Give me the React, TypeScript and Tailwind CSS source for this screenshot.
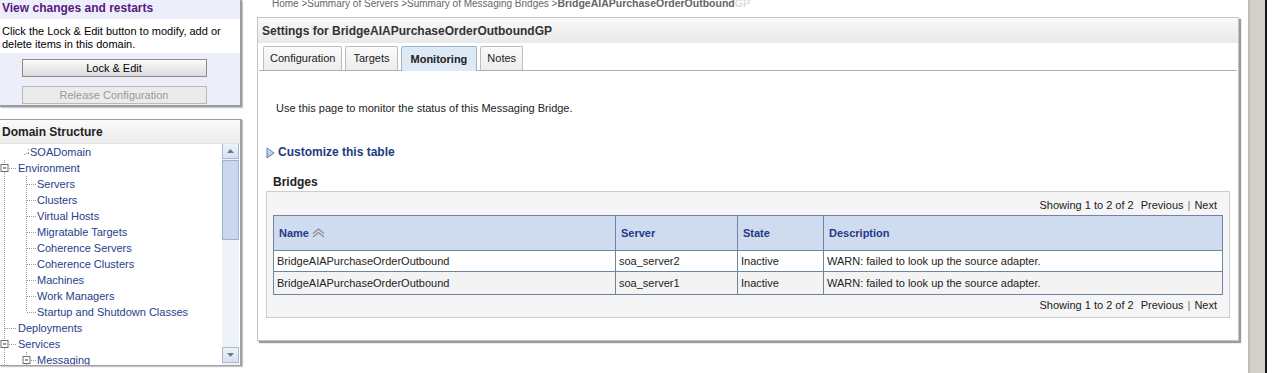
import React from "react";

const FONT = "font-['Liberation_Sans',Arial,sans-serif]";

type G = "none" | "line" | "tee" | "end" | "box" | "boxTop";

// tree connector drawing for one row (two guide columns)
function Guides({ g0, g1, dots }: { g0: G; g1: G; dots?: boolean }) {
  const c = "#9a9a9a";
  const col = (g: G, x: number, reach: number) => {
    const parts: React.ReactNode[] = [];
    if (g === "line" || g === "tee") parts.push(<line key="v" x1={x} y1={0} x2={x} y2={16} />);
    if (g === "end") parts.push(<line key="v" x1={x} y1={0} x2={x} y2={8} />);
    if (g === "tee" || g === "end") parts.push(<line key="h" x1={x} y1={8} x2={reach} y2={8} />);
    if (g === "box" || g === "boxTop") {
      parts.push(<line key="a" x1={x} y1={0} x2={x} y2={4} />);
      if (g === "box") parts.push(<line key="b" x1={x} y1={12} x2={x} y2={16} />);
      parts.push(<line key="h" x1={x + 4} y1={8} x2={reach} y2={8} />);
    }
    return parts;
  };
  const box = (g: G, x: number) =>
    g === "box" || g === "boxTop" ? (
      <g>
        <rect x={x - 3.5} y={4.5} width={7} height={7} fill="#fff" stroke="#707070" />
        <line x1={x - 1.5} y1={8} x2={x + 1.5} y2={8} stroke="#333" />
      </g>
    ) : null;
  return (
    <svg width={37} height={16} className="shrink-0">
      <g stroke={c} strokeDasharray="1 1" shapeRendering="crispEdges">
        {col(g0, 4.5, 17)}
        {col(g1, 26.5, 36)}
      </g>
      {box(g0, 4.5)}
      {box(g1, 26.5)}
      {dots && (
        <g fill="#8a8a8a">
          <rect x={24} y={10} width={1} height={1} />
          <rect x={26} y={9} width={1} height={1} />
          <rect x={28} y={8} width={1} height={2} />
          <rect x={28} y={5} width={1} height={1} />
        </g>
      )}
    </svg>
  );
}

const tree: { label: string; level: 0 | 1 | 2; g0: G; g1: G; dots?: boolean }[] = [
  { label: "SOADomain", level: 0, g0: "none", g1: "none", dots: true },
  { label: "Environment", level: 1, g0: "box", g1: "none" },
  { label: "Servers", level: 2, g0: "line", g1: "tee" },
  { label: "Clusters", level: 2, g0: "line", g1: "tee" },
  { label: "Virtual Hosts", level: 2, g0: "line", g1: "tee" },
  { label: "Migratable Targets", level: 2, g0: "line", g1: "tee" },
  { label: "Coherence Servers", level: 2, g0: "line", g1: "tee" },
  { label: "Coherence Clusters", level: 2, g0: "line", g1: "tee" },
  { label: "Machines", level: 2, g0: "line", g1: "tee" },
  { label: "Work Managers", level: 2, g0: "line", g1: "tee" },
  { label: "Startup and Shutdown Classes", level: 2, g0: "line", g1: "end" },
  { label: "Deployments", level: 1, g0: "tee", g1: "none" },
  { label: "Services", level: 1, g0: "box", g1: "none" },
  { label: "Messaging", level: 2, g0: "line", g1: "box" },
];

function TreeRow({ label, level, g0, g1, dots }: (typeof tree)[number]) {
  return (
    <div className="flex h-4 items-center whitespace-nowrap">
      {level === 1 ? (
        <div className="w-[18px] shrink-0 overflow-hidden">
          <Guides g0={g0} g1={g1} />
        </div>
      ) : (
        <Guides g0={g0} g1={g1} dots={dots} />
      )}
      <span className={level === 0 ? "-ml-[7px] text-[#27408b]" : "text-[#27408b]"}>{label}</span>
    </div>
  );
}

function ScrollArrow({ down }: { down?: boolean }) {
  return (
    <div className="flex h-4 items-center justify-center border border-[#a9b9cf] bg-gradient-to-b from-[#eef3fa] to-[#d6e1f0]">
      <svg width={7} height={4}>
        <path d={down ? "M0 0h7L3.5 4z" : "M0 4h7L3.5 0z"} fill="#6b7a8f" />
      </svg>
    </div>
  );
}

function ChangeCenter() {
  return (
    <div className="h-[107px] border-r-2 border-b-2 border-[#9c9c9c] bg-[#eceffa] shadow-[1px_1px_1px_#c8c8c8]">
      <div className="h-[19px] px-[2px] pt-[2px] text-[12px] font-bold leading-[13px] text-[#5a1782]">
        View changes and restarts
      </div>
      <div className="h-[34px] bg-white px-[2px] pt-[6px] text-[11px] leading-[13px] text-black">
        Click the Lock &amp; Edit button to modify, add or delete items in this domain.
      </div>
      <div className="flex flex-col items-center gap-[9px] pt-[6px] pr-[12px]">
        <button className="h-[18px] w-[185px] border border-[#8b8b8b] bg-gradient-to-b from-[#fbfbfb] to-[#dcdcdc] text-[11px] text-black">
          Lock &amp; Edit
        </button>
        <button className="h-[18px] w-[185px] border border-[#b9b9b9] bg-[#ebebeb] text-[11px] text-[#9a9a9a]">
          Release Configuration
        </button>
      </div>
    </div>
  );
}

function DomainStructure() {
  return (
    <div className="mt-[12px] h-[247px] border-t border-r-2 border-b border-[#a0a0a0] bg-white shadow-[1px_1px_1px_#c8c8c8]">
      <div className="h-[24px] border-b border-[#e2e2e2] bg-gradient-to-b from-[#fafafa] to-[#ececec] px-[2px] pt-[6px] text-[12px] font-bold leading-[13px] text-[#222]">
        Domain Structure
      </div>
      <div className="flex h-[221px] overflow-hidden">
        <div className="flex-1 text-[11px] leading-4">
          {tree.map((r) => (
            <TreeRow key={r.label} {...r} />
          ))}
        </div>
        <div className="mr-[1px] -mt-[1px] flex w-[17px] flex-col bg-[#eef3fa]">
          <ScrollArrow />
          <div className="mt-[1px] h-[80px] border border-[#9fb3cf] bg-[#c9d8ee]" />
          <div className="flex-1" />
          <ScrollArrow down />
          <div className="h-[2px]" />
        </div>
      </div>
    </div>
  );
}

function SortIcon() {
  return (
    <svg width={13} height={10} className="ml-[3px] inline-block align-[-1px]">
      <path d="M1 9l5.5-4.5L12 9M1 5.5L6.5 1 12 5.5" fill="none" stroke="#8a8a8a" strokeWidth={1.1} />
    </svg>
  );
}

function Pager() {
  return (
    <div className="flex h-[20px] items-center justify-end pr-[6px] text-[11px] text-[#222]">
      Showing 1 to 2 of 2<span className="ml-[7px]">Previous</span>
      <span className="mx-[4px] text-[#777]">|</span>Next
    </div>
  );
}

const rows = [
  { name: "BridgeAIAPurchaseOrderOutbound", server: "soa_server2", state: "Inactive", desc: "WARN: failed to look up the source adapter." },
  { name: "BridgeAIAPurchaseOrderOutbound", server: "soa_server1", state: "Inactive", desc: "WARN: failed to look up the source adapter." },
];

const tabs = [
  { t: "Configuration", p: "px-[6px]" },
  { t: "Targets", p: "px-[7px]" },
  { t: "Monitoring", p: "px-[9px]" },
  { t: "Notes", p: "px-[6px]" },
];

function Settings() {
  return (
    <div className="ml-[15px] mr-[9px] h-[324px] border border-[#c4c4c4] bg-white shadow-[2px_2px_1px_#9a9a9a]">
      <div className="h-[25px] bg-gradient-to-b from-[#f9f9f9] to-[#e9e9e9] px-[4px] pt-[7px] text-[12px] font-bold leading-[13px] text-[#333]">
        Settings for BridgeAIAPurchaseOrderOutboundGP
      </div>
      <div className="mx-[1px] mt-[4px] flex h-[24px] items-end gap-[3px] border-b border-[#9fb4c6] pl-[4px]">
        {tabs.map(({ t, p }) =>
          t === "Monitoring" ? (
            <div key={t} className={`-mb-px flex h-[25px] items-center rounded-t-[2px] border border-b-0 border-[#9fb4c6] bg-[#dde9f5] ${p} text-[11px] font-bold text-[#222]`}>
              {t}
            </div>
          ) : (
            <div key={t} className={`flex h-[24px] items-center rounded-t-[2px] border border-b-0 border-[#bdbdbd] bg-gradient-to-b from-[#fafafa] to-[#ededed] ${p} text-[11px] text-[#222]`}>
              {t}
            </div>
          )
        )}
      </div>
      <div className="px-[8px]">
        <p className="ml-[10px] mt-[31px] text-[11px] leading-[13px] text-[#222]">
          Use this page to monitor the status of this Messaging Bridge.
        </p>
        <div className="mt-[31px] flex items-center gap-[3px]">
          <svg width={9} height={12}>
            <defs>
              <linearGradient id="tri" x1="0" y1="0" x2="0" y2="1">
                <stop offset="0" stopColor="#e3ecf8" />
                <stop offset="1" stopColor="#9fb7d9" />
              </linearGradient>
            </defs>
            <path d="M1 1l7 5-7 5z" fill="url(#tri)" stroke="#5d7fb0" strokeLinejoin="round" />
          </svg>
          <span className="text-[12px] font-bold leading-[13px] text-[#1d3b7c]">Customize this table</span>
        </div>
        <div className="ml-[7px] mt-[17px] text-[12px] font-bold leading-[13px] text-[#222]">Bridges</div>
        <div className="mt-[2px] h-[127px] border border-[#cdcdcd] bg-[#f5f5f5] px-[6px] pt-[3px]">
          <Pager />
          <table className="w-full border-collapse text-[11px] text-[#222]">
            <thead>
              <tr className="h-[35px] bg-[#cfdcef]">
                <th className="w-[342px] border border-[#6c869f] pl-[5px] text-left font-bold text-[#1f3a86]">
                  Name<SortIcon />
                </th>
                <th className="w-[122px] border border-[#6c869f] pl-[5px] text-left font-bold text-[#1f3a86]">Server</th>
                <th className="w-[86px] border border-[#6c869f] pl-[5px] text-left font-bold text-[#1f3a86]">State</th>
                <th className="border border-[#6c869f] pl-[5px] text-left font-bold text-[#1f3a86]">Description</th>
              </tr>
            </thead>
            <tbody>
              {rows.map((r, i) => (
                <tr key={i} className={i === 0 ? "h-[21px] bg-white" : "h-[23px] bg-[#f3f3f3]"}>
                  <td className="border border-[#6c869f] pl-[3px] leading-[13px]">{r.name}</td>
                  <td className="border border-[#6c869f] pl-[3px] leading-[13px]">{r.server}</td>
                  <td className="border border-[#6c869f] pl-[3px] leading-[13px]">{r.state}</td>
                  <td className="border border-[#6c869f] pl-[3px] leading-[13px]">{r.desc}</td>
                </tr>
              ))}
            </tbody>
          </table>
          <Pager />
        </div>
      </div>
    </div>
  );
}

export default function App() {
  return (
    <div className={`${FONT} flex h-[373px] w-[1280px] overflow-hidden bg-white`}>
      <div className="w-[242px] shrink-0">
        <ChangeCenter />
        <DomainStructure />
      </div>
      <div className="w-[1006px] shrink-0">
        <div className="-mt-[3px] h-[20px] whitespace-nowrap pl-[30px] text-[10px] leading-[12px] text-[#666]">
          Home &gt;Summary of Servers &gt;Summary of Messaging Bridges &gt;
          <span className="text-[10.5px] font-bold">BridgeAIAPurchaseOrderOutbound</span>
          <span className="text-[10.5px] font-bold text-[#ddd]">GP</span>
        </div>
        <Settings />
      </div>
      <div className="w-[2px] shrink-0 bg-[#bdbdbd]" />
      <div className="w-[15px] shrink-0 bg-[#d4d0c8]" />
      <div className="w-[2px] shrink-0 bg-[#1a1a1a]" />
      <div className="flex-1" />
    </div>
  );
}
